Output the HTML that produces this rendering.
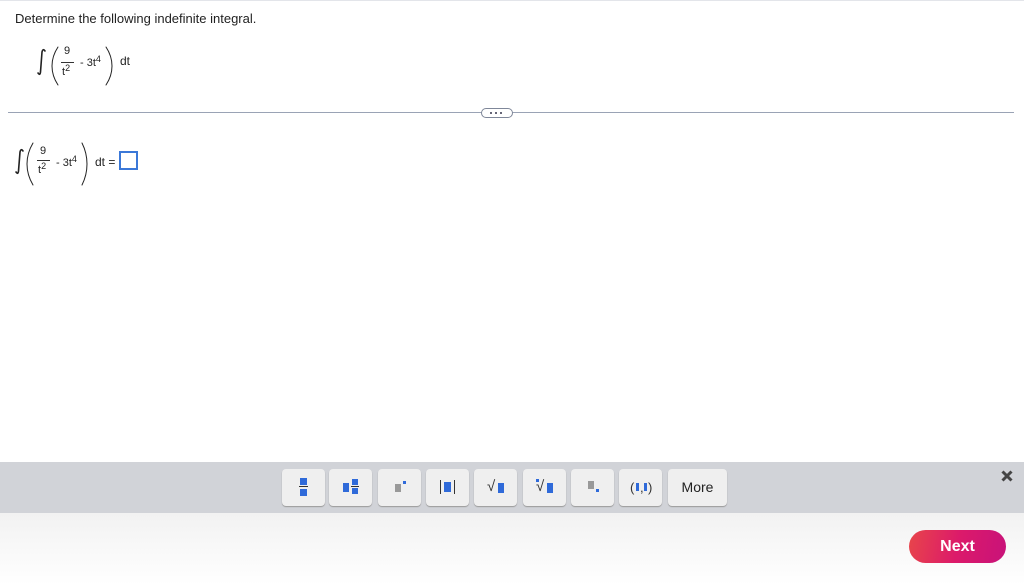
<!DOCTYPE html>
<html><head><style>
body{margin:0;width:1024px;height:585px;position:relative;font-family:"Liberation Sans",sans-serif;background:#fff;overflow:hidden;color:#222}
.a{position:absolute}
.btn{position:absolute;top:469px;width:43px;height:37px;background:#efefef;border-radius:4px;box-shadow:0 1px 1px #999;}
.b{background:#2f6ad9;position:absolute}
.g{background:#999;position:absolute}
svg{position:absolute;overflow:visible}
</style></head><body>
<div class="a" style="left:0;top:0;width:1024px;height:1px;background:#e3e5ea"></div>
<div class="a" style="left:15px;top:11px;font-size:13px">Determine the following indefinite integral.</div>

<svg style="left:0;top:0" width="200" height="200">
<g fill="none" stroke="#222" stroke-linecap="round">
<path d="M45 51 Q43 48 42 52 L40.5 72 Q40 76 38 73" stroke-width="1.6"/>
<path d="M58 47 Q52 56 52 66 Q52 76 58 85" stroke-width="1"/>
<path d="M106 47 Q112 56 112 66 Q112 76 106 85" stroke-width="1"/>
<path d="M23 151 Q21 148 20 152 L18.5 171 Q18 175 16 172" stroke-width="1.6"/>
<path d="M33 143 Q27 153 27 164 Q27 175 33 185" stroke-width="1"/>
<path d="M82 143 Q87 153 87 164 Q87 175 82 185" stroke-width="1"/>
</g></svg>

<div class="a" style="left:64px;top:45px;font-size:11px">9</div>
<div class="a" style="left:61px;top:62px;width:13px;height:1px;background:#333"></div>
<div class="a" style="left:62px;top:63px;font-size:11px">t<sup style="font-size:9px;vertical-align:4px">2</sup></div>
<div class="a" style="left:80px;top:54px;font-size:11px">- 3t<sup style="font-size:9px;vertical-align:4px">4</sup></div>
<div class="a" style="left:120px;top:54px;font-size:12px">dt</div>

<div class="a" style="left:8px;top:112px;width:1006px;height:1px;background:#9aa3b5"></div>
<div class="a" style="left:481px;top:108px;width:30px;height:8px;border:1px solid #7f8799;border-radius:5px;background:#fff"></div>
<div class="a" style="left:490px;top:112px;width:2px;height:2px;background:#667"></div>
<div class="a" style="left:495px;top:112px;width:2px;height:2px;background:#667"></div>
<div class="a" style="left:500px;top:112px;width:2px;height:2px;background:#667"></div>

<div class="a" style="left:40px;top:145px;font-size:11px">9</div>
<div class="a" style="left:37px;top:160px;width:13px;height:1px;background:#333"></div>
<div class="a" style="left:38px;top:161px;font-size:11px">t<sup style="font-size:9px;vertical-align:4px">2</sup></div>
<div class="a" style="left:56px;top:154px;font-size:11px">- 3t<sup style="font-size:9px;vertical-align:4px">4</sup></div>
<div class="a" style="left:95px;top:155px;font-size:12px">dt =</div>
<div class="a" style="left:119px;top:151px;width:15px;height:15px;border:2px solid #3b78d8;background:#fff"></div>

<div class="a" style="left:0;top:462px;width:1024px;height:51px;background:#d1d3d8"></div>
<div class="btn" style="left:282px"><div class="b" style="left:18px;top:9px;width:7px;height:7px"></div><div class="a" style="left:17px;top:17px;width:9px;height:1px;background:#333"></div><div class="b" style="left:18px;top:20px;width:7px;height:7px"></div></div>
<div class="btn" style="left:329px"><div class="b" style="left:14px;top:14px;width:6px;height:9px"></div><div class="b" style="left:23px;top:10px;width:6px;height:6px"></div><div class="a" style="left:22px;top:17px;width:8px;height:1px;background:#333"></div><div class="b" style="left:23px;top:19px;width:6px;height:6px"></div></div>
<div class="btn" style="left:378px"><div class="g" style="left:17px;top:15px;width:6px;height:8px"></div><div class="b" style="left:25px;top:12px;width:3px;height:3px"></div></div>
<div class="btn" style="left:426px"><div class="a" style="left:14px;top:11px;width:1px;height:14px;background:#333"></div><div class="b" style="left:18px;top:13px;width:7px;height:10px"></div><div class="a" style="left:28px;top:11px;width:1px;height:14px;background:#333"></div></div>
<div class="btn" style="left:474px"><div class="a" style="left:13px;top:9px;font-size:15px;color:#333">√</div><div class="b" style="left:24px;top:14px;width:6px;height:10px"></div></div>
<div class="btn" style="left:523px"><div class="b" style="left:13px;top:10px;width:3px;height:3px"></div><div class="a" style="left:13px;top:9px;font-size:15px;color:#333">√</div><div class="b" style="left:24px;top:14px;width:6px;height:10px"></div></div>
<div class="btn" style="left:571px"><div class="g" style="left:17px;top:12px;width:6px;height:8px"></div><div class="b" style="left:25px;top:20px;width:3px;height:3px"></div></div>
<div class="btn" style="left:619px;font-size:13px;color:#333"><div class="a" style="left:11px;top:11px">(</div><div class="b" style="left:17px;top:14px;width:3px;height:8px"></div><div class="a" style="left:21px;top:11px">,</div><div class="b" style="left:25px;top:14px;width:3px;height:8px"></div><div class="a" style="left:29px;top:11px">)</div></div>
<div class="btn" style="left:668px;width:59px;font-size:14px;line-height:37px;text-align:center;color:#222">More</div>
<svg style="left:1001px;top:470px" width="12" height="12"><path d="M1.5 1.5L10.5 10.5M10.5 1.5L1.5 10.5" stroke="#444" stroke-width="3"/></svg>

<div class="a" style="left:0;top:513px;width:1024px;height:72px;background:linear-gradient(#f2f2f2,#fff)"></div>
<div class="a" style="left:909px;top:530px;width:97px;height:33px;border-radius:17px;background:linear-gradient(100deg,#e8454a,#dc1a6a 50%,#c8127a);color:#fff;font-weight:bold;font-size:16px;line-height:33px;text-align:center">Next</div>
</body></html>
